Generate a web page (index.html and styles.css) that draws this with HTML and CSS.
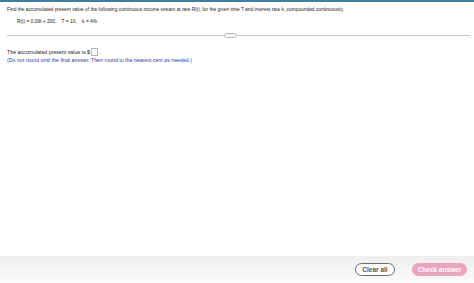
FILE: index.html
```html
<!DOCTYPE html>
<html>
<head>
<meta charset="utf-8">
<link rel="stylesheet" href="styles.css">
</head>
<body>
<div class="page">
  <div class="topbar"></div>
  <div class="content">
    <p class="question">Find the accumulated present value of the following continuous income stream at rate R(t), for the given time T and interest rate k, compounded continuously.</p>
    <p class="formula">R(t) = 0.09t + 200,&nbsp;&nbsp;&nbsp; T = 10,&nbsp;&nbsp;&nbsp; k = 4%</p>
    <div class="divider"><span class="line left"></span><span class="pill"></span><span class="line right"></span></div>
    <p class="answer">The accumulated present value is $<span class="box"></span>.</p>
    <p class="note">(Do not round until the final answer. Then round to the nearest cent as needed.)</p>
  </div>
  <div class="footer">
    <button class="btn clear">Clear all</button>
    <button class="btn check">Check answer</button>
  </div>
</div>
</body>
</html>
```
FILE: styles.css
```css
html, body {
  margin: 0;
  padding: 0;
  background: #ffffff;
}
body {
  font-family: "Liberation Sans", Arial, sans-serif;
  font-size: 4.85px;
  color: #222;
}
.page {
  display: flex;
  flex-direction: column;
  height: 283px;
  width: 474px;
}
.topbar {
  height: 2px;
  background: #3f7fa2;
}
.content {
  padding: 5px 4px 0 7px;
}
.content p {
  margin: 0;
  line-height: 6px;
}
.formula {
  margin-top: 6px !important;
  padding-left: 10px;
}
.divider {
  display: flex;
  align-items: center;
  margin-top: 8px;
  height: 5px;
}
.divider .line {
  height: 1px;
  background: #c8c8c8;
}
.divider .left {
  width: 217px;
}
.divider .right {
  flex: 1;
}
.divider .pill {
  width: 11px;
  height: 3px;
  border: 1px solid #b8b8b8;
  border-radius: 3px;
  background: #f4f4f4;
}
.answer {
  margin-top: 10px !important;
  display: flex;
  align-items: center;
  height: 8px;
  font-size: 5.25px;
}
.box {
  display: inline-block;
  width: 5px;
  height: 6px;
  border: 1px solid #a9b7c9;
  margin: 0 1px;
}
.note {
  margin-top: 1px !important;
  color: #1c3fa6;
  font-size: 5.25px;
}
.footer {
  margin-top: auto;
  height: 27px;
  background: linear-gradient(#eeeeee, #fbfbfb);
  display: flex;
  justify-content: flex-end;
  align-items: center;
  gap: 17px;
  padding-right: 7px;
}
.btn {
  font-family: "Liberation Sans", Arial, sans-serif;
  font-size: 6.5px;
  font-weight: bold;
  height: 13px;
  border-radius: 7px;
  padding: 0;
  display: flex;
  align-items: center;
  justify-content: center;
}
.clear {
  width: 40px;
  background: #ffffff;
  border: 1px solid #6a6a6a;
  color: #555;
}
.check {
  width: 55px;
  background: #e9a6bb;
  border: none;
  color: #ffffff;
}
```
